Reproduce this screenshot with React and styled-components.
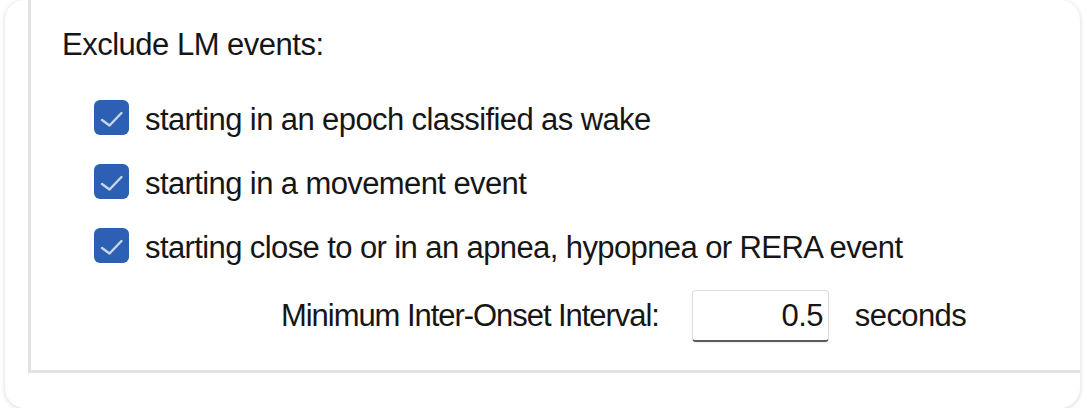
import styled, { createGlobalStyle } from "styled-components";

const GlobalStyle = createGlobalStyle`
  html, body {
    margin: 0;
    padding: 0;
    background: #ffffff;
  }
  body {
    font-family: "Liberation Sans", Arial, sans-serif;
    color: #161616;
  }
`;

const rows = [
  "starting in an epoch classified as wake",
  "starting in a movement event",
  "starting close to or in an apnea, hypopnea or RERA event",
];

const Check = () => (
  <svg width="35" height="35" viewBox="0 0 35 35">
    <path
      d="M8 20 L15.5 25.5 L27.5 13"
      fill="none"
      stroke="#c7d5ee"
      strokeWidth="2.4"
      strokeLinecap="round"
      strokeLinejoin="round"
    />
  </svg>
);

const App = () => {
  return (
    <>
      <GlobalStyle />
      <Card>
        <Panel>
          <Heading>Exclude LM events:</Heading>
          <List>
            {rows.map((label) => (
              <Row key={label}>
                <Box>
                  <Check />
                </Box>
                <Label>{label}</Label>
              </Row>
            ))}
          </List>
          <IntervalRow>
            <Label $tight="-1.05px">Minimum Inter-Onset Interval:</Label>
            <Field>0.5</Field>
            <Label $tight="-0.6px">seconds</Label>
          </IntervalRow>
        </Panel>
      </Card>
    </>
  );
};

const Card = styled.div`
  margin-left: 5px;
  width: 1075px;
  height: 408px;
  background: #ffffff;
  border-radius: 20px;
  box-shadow: 0 1px 5px rgba(0, 0, 0, 0.16);
  padding-left: 23px;
  box-sizing: border-box;
  overflow: hidden;
`;

const Panel = styled.section`
  border-left: 3px solid #e2e2e2;
  border-bottom: 3px solid #e2e2e2;
  padding: 27px 0 28px 31px;
  display: flex;
  flex-direction: column;
`;

const Heading = styled.div`
  font-size: 31px;
  line-height: 36px;
  letter-spacing: -0.5px;
`;

const List = styled.div`
  display: flex;
  flex-direction: column;
  margin-top: 25px;
  padding-left: 32px;
`;

const Row = styled.div`
  display: flex;
  align-items: center;
  height: 64px;
  gap: 16px;
`;

const Box = styled.div`
  width: 35px;
  height: 35px;
  border-radius: 6px;
  background: #2d60b5;
  margin-bottom: 5px;
  display: flex;
  flex-shrink: 0;
`;

const Label = styled.span`
  font-size: 31px;
  line-height: 36px;
  letter-spacing: ${(p) => p.$tight || "-0.6px"};
  white-space: nowrap;
`;

const IntervalRow = styled.div`
  display: flex;
  align-items: center;
  height: 52px;
  margin-top: 10px;
  padding-left: 219px;
`;

const Field = styled.div`
  width: 137px;
  height: 52px;
  box-sizing: border-box;
  margin: 0 26px 0 33px;
  background: #ffffff;
  border: 1px solid #dedede;
  border-bottom: 2px solid #5c5c5c;
  border-radius: 4px;
  box-shadow: 0 1px 2px rgba(0, 0, 0, 0.08);
  font-size: 31px;
  line-height: 49px;
  letter-spacing: -0.6px;
  text-align: right;
  padding-right: 5px;
`;

export default App;
